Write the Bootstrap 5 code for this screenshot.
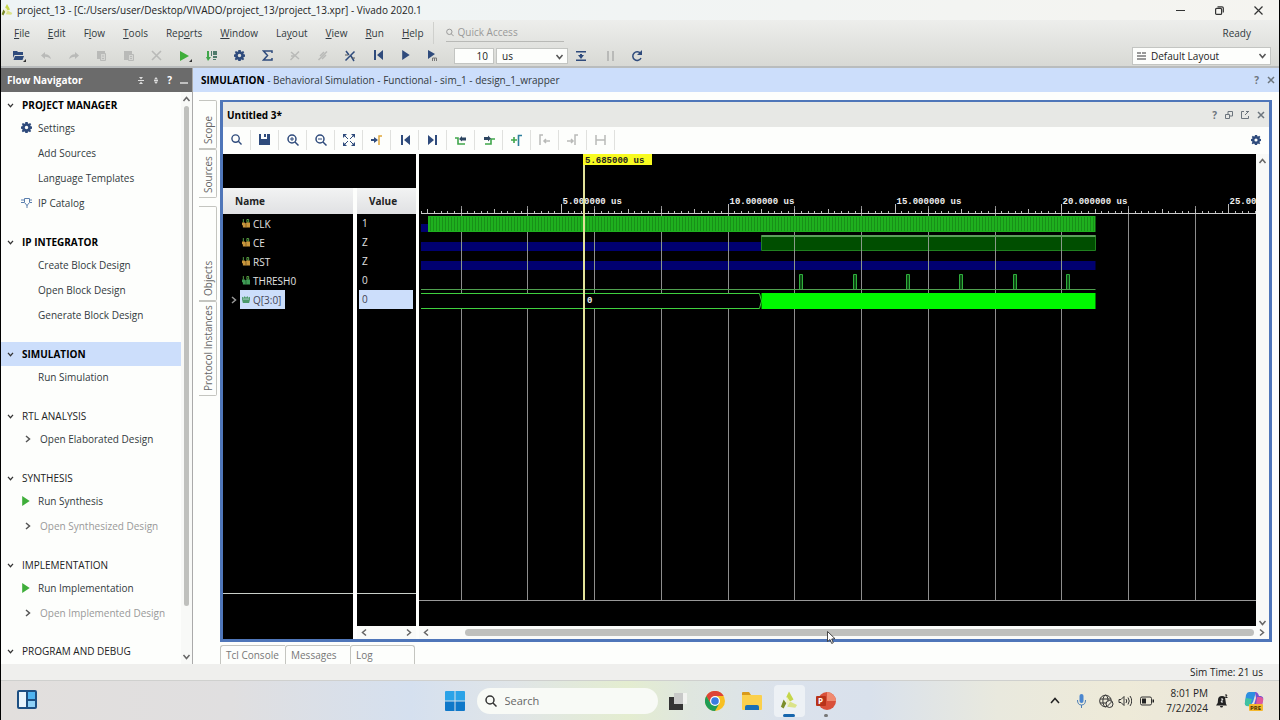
<!DOCTYPE html>
<html lang="en">
<head>
<meta charset="utf-8">
<meta name="viewport" content="width=device-width, initial-scale=1">
<title>project_13 - Vivado 2020.1</title>
<link href="https://cdn.jsdelivr.net/npm/bootstrap@5.3.0/dist/css/bootstrap.min.css" rel="stylesheet">
<style>
  :root { --ink: #333a40; --navy: #2f4b7c; --frame: #4f76b9; --pick: #ccdefb; }
  body { font: 10px/14px "Open Sans", "Noto Sans", sans-serif; color: var(--ink); background: #fdfefc; border: solid #000; border-width: 0 1px; }
  button { font: inherit; color: inherit; background: none; border: 0; padding: 0; }
  svg { display: block; flex: none; }
  a { color: inherit; text-decoration: none; }
  .stroke { fill: none; stroke: currentColor; stroke-width: 1.5; }
  .titlebar { height: 20px; background: linear-gradient(90deg, #eef4f5, #f1f4f4 50%, #f5f4f0); color: #222; }
  .window-buttons { gap: 30px; margin-right: 16px; }
  .chrome { background: linear-gradient(#edeeec, #d8d9d5); border-bottom: 2px solid #b9bcbd; }
  .menu-row { height: 26px; }
  .menu-row .menu-item { padding: 0 9px; }
  .menu-rule { width: 1px; height: 22px; background: #cfd0cd; }
  .quick { width: 118px; height: 22px; margin-left: 12px; padding-top: 3px; border-bottom: 1px solid #b8b9b6; color: #999; }
  .quick input { font: inherit; background: none; border: 0; width: 100%; padding: 0; outline: 0; }
  .quick input::placeholder { color: #999; opacity: 1; }
  .tool-row { height: 20px; color: var(--navy); }
  .tool-set { width: 442px; }
  .tool-set button { flex: 1 1 0; display: flex; justify-content: center; }
  .faded { color: #b9bab8; }
  .field { font: inherit; color: #222; background-color: #fdfefc; border: 1px solid #c3c5c2; border-radius: 0; height: 16px; padding: 0 5px; appearance: none; }
  .run-time { width: 40px; margin-left: 7px; }
  .run-unit { width: 72px; }
  .layout-pick { width: 139px; padding-left: 18px; height: 18px; }
  .pick-wrap { position: relative; margin-left: 2px; }
  .pick-wrap svg { position: absolute; right: 4px; top: 6px; pointer-events: none; }
  .pick-wrap svg.lead-icon { right: auto; left: 5px; top: 5px; }
  .side { width: 191px; }
  .side-head { height: 24px; background: #6b6b6b; color: #fff; padding: 0 4px 0 6px; }
  .tree { padding-top: 1px; }
  .tree-head { height: 24px; color: #222; padding-left: 6px; }
  .tree-head:last-child { height: 22px; }
  .tree-head.strong { font-weight: 700; color: #000; }
  .tree-head.current { background: var(--pick); }
  .tree-list { margin: -2px 0 15px; }
  .tree-item { height: 25px; }
  .tree-mark { width: 17px; margin-left: 20px; }
  .tree-mark.wide { width: 19px; }
  .dim { color: #999; }
  .vscroll { width: 11px; background: #f8f9f7; }
  .side-thumb { margin-bottom: 48px; }
  .wave-scroll { width: 13px; }
  .thumb { background: #bfc0bd; border-radius: 4px; }
  .view-head { height: 24px; background: var(--pick); border-left: 1px solid #aaa; }
  .side-tabs { width: 24px; border-left: 1px solid #aaa; padding: 8px 0 0 6px; }
  .side-tab { writing-mode: vertical-rl; transform: rotate(180deg); width: 18px; border: 1px solid #c4c5c0; border-right: 0; border-radius: 2px 0 0 2px; text-align: left; padding: 4px 0; color: #666; white-space: nowrap; height: 49px; }
  .side-tab.tall { height: 95px; }
  .wave-window { border: 3px solid var(--frame); border-top-width: 2px; margin: 8px 7px 0 0; }
  .win-head { height: 25px; background: #e7e8e5; }
  .win-tools { height: 27px; padding-bottom: 2px; color: var(--navy); }
  .win-tools .tool { width: 28px; height: 20px; border-right: 1px solid #e0e1de; }
  .signals { width: 196px; border-right: 3px solid #fdfefc; background: #000; }
  .sig-table { table-layout: fixed; width: 193px; margin-top: 34px; color: #e2e2e2; border-collapse: separate; border-spacing: 0; }
  .name-col { width: 130px; }
  .sig-table th { height: 26px; padding: 0 12px; color: #222; font-weight: 700; background: linear-gradient(#f2f3f3, #e0e1e3); }
  .sig-table td { height: 19px; padding: 0; }
  .sig-table th + th, .sig-table td + td { border-left: 4px solid #fdfefc; }
  .sig-table td + td { padding-left: 2px; }
  .sig-name { height: 19px; gap: 3px; }
  .sig-name .lead-gap { width: 6px; }
  .sig-name .tag { height: 19px; padding: 0 4px 0 2px; gap: 3px; }
  .chosen { background: var(--pick); color: #445; }
  .val { height: 19px; padding-left: 3px; margin-right: 3px; line-height: 19px; }
  .name-rest { width: 130px; }
  .rest-fill { border-bottom: 1px solid #c9cfc9; }
  .foot-gap { height: 32px; background: #000; }
  .bar-h { height: 13px; background: #fafbf9; color: #666; }
  .wave-foot { height: 26px; background: #000; border-top: 1px solid #999; }
  .wave-bar { position: relative; }
  .wave-thumb { margin: 0 5px 0 36px; }
  .pointer { position: absolute; left: 408px; top: 5px; z-index: 3; }
  .mono { font: bold 9px "Liberation Mono", monospace; fill: #eee; }
  .console { padding-top: 3px; }
  .console-tab { width: 65px; height: 19px; border: 1px solid #c4c5c0; border-width: 1px 0 0 1px; border-radius: 3px 0 0 0; text-align: left; padding-left: 5px; color: #777; }
  .console-tab:last-child { border-right-width: 1px; border-radius: 3px 3px 0 0; }
  .status { height: 16px; background: #efefed; color: #222; }
  .taskbar { height: 40px; border-top: 1px solid #cfd0ce; color: #222; background: linear-gradient(90deg, #e2dfdd, #e0dfe0 18%, #d5e0ef 32%, #e0e5e8 40%, #e4edd0 49%, #dfe6df 54%, #dbe2ec 61%, #d9e1ec 68%, #e9e9de 78%, #eeead8 88%, #e9e5dd); }
  .task-search { width: 181px; height: 26px; margin-right: 2px; border-radius: 13px; background: #f8faf6; font-size: 11px; }
  .task-search input { font: inherit; background: none; border: 0; width: 100%; padding: 0; outline: 0; }
  .task-search input::placeholder { color: #666; opacity: 1; }
  .task-app { width: 37px; height: 32px; position: relative; }
  .task-app.open { background: #edf1f5; border-radius: 4px; width: 31px; margin: 0 3px; }
  .task-app.open::after, .task-app.idle::after { content: ""; position: absolute; bottom: 0; left: 50%; margin-left: -6px; width: 12px; height: 3px; border-radius: 2px; background: #1766ad; }
  .task-app.idle::after { width: 4px; margin-left: -2px; background: #777; }
  .task-side { flex: 1 1 0; }
  .tray { padding-right: 15px; }
</style>
</head>
<body class="d-flex flex-column min-vh-100">

<svg width="0" height="0" class="position-absolute" aria-hidden="true">
  <symbol id="gear" viewBox="0 0 12 12"><path fill="currentColor" fill-rule="evenodd" d="M4.700 0h2.600l.3 1.500 1 .4L9.900 1l1.300 1.400L10.200 3.600l.4 1L12 4.800v2.500l-1.400.3-.4 1 .9 1.300L9.800 11.200l-1.300-.9-1 .4L7.300 12H4.700l-.3-1.300-1-.4-1.400.9L.8 9.900l.9-1.400-.4-1L0 7.300V4.800l1.400-.3.4-1L.9 2.300 2.200 1l1.300.9 1-.4zM6 4.100A1.900 1.900 0 1 0 6 7.900 1.900 1.900 0 1 0 6 4.100z"/></symbol>
  <symbol id="down" viewBox="0 0 8 6"><path class="stroke" d="M1 1l3 3.500L7 1"/></symbol>
  <symbol id="up" viewBox="0 0 8 6"><path class="stroke" d="M1 5l3-3.500L7 5"/></symbol>
  <symbol id="right" viewBox="0 0 6 8"><path class="stroke" d="M1 1l3.500 3L1 7"/></symbol>
  <symbol id="left" viewBox="0 0 6 8"><path class="stroke" d="M5 1L1.500 4 5 7"/></symbol>
  <symbol id="cross" viewBox="0 0 8 8"><path class="stroke" d="M1 1l6 6M7 1L1 7"/></symbol>
  <symbol id="play" viewBox="0 0 10 12"><path fill="currentColor" d="M1 0l9 6-9 6z"/></symbol>
  <symbol id="lens" viewBox="0 0 12 12"><circle class="stroke" cx="5" cy="5" r="4"/><path class="stroke" d="M8 8l3.500 3.500"/></symbol>
  <symbol id="first" viewBox="0 0 10 10"><path fill="currentColor" d="M1 0h2v10H1zM10 0v10L4 5z"/></symbol>
  <symbol id="last" viewBox="0 0 10 10"><path fill="currentColor" d="M7 0h2v10H7zM0 0v10l6-5z"/></symbol>
  <symbol id="bits" viewBox="0 0 9 10"><path fill="none" stroke="#5fae4a" d="M1.500 0v4M5.500 .5h2v3h-2z"/><path fill="currentColor" d="M0 4h3l1 1 1-1h4v5.500H1V7H0z"/><path stroke="#00000060" d="M4.500 5v4"/></symbol>
  <symbol id="bus" viewBox="0 0 9 10"><path fill="#4c9a6b" d="M0 2l2 1 1-2 1.500 2L6 1l1 2 2-1v3L8 9H1L0 5z"/><path stroke="#b8d8d8" d="M1 4.500h7"/></symbol>
  <symbol id="vivado" viewBox="0 0 20 20"><path fill="#c5d64a" d="M10 0l5 9-4 2-4-5z"/><path fill="#dbe38a" d="M11 11l8 4-2 3-9-1z"/><path fill="#7b8d2c" d="M4 9l3 4-3 6-3-2z"/><path fill="#eff2be" d="M8 6l3 5-3 5-1-4z"/></symbol>
</svg>

<header>
  <div class="titlebar d-flex align-items-center">
    <svg width="12" height="12"><use href="#vivado"/></svg>
    <span class="ms-1">project_13 - [C:/Users/user/Desktop/VIVADO/project_13/project_13.xpr] - Vivado 2020.1</span>
    <div class="window-buttons ms-auto d-flex align-items-center">
      <button aria-label="Minimize"><svg width="9" height="9"><path stroke="#333" d="M0 4.500h9"/></svg></button>
      <button aria-label="Restore"><svg width="9" height="9" fill="none" stroke="#333" stroke-width="1.200"><rect x=".6" y="2.400" width="6" height="6" rx="1"/><path d="M2.500 .8H7q1.300 0 1.300 1.300v4.500"/></svg></button>
      <button aria-label="Close"><svg width="9" height="9"><path stroke="#333" stroke-width="1.200" d="M.5 .5l8 8M8.500 .5l-8 8"/></svg></button>
    </div>
  </div>
  <div class="chrome">
    <div class="menu-row d-flex align-items-center">
      <nav class="d-flex ps-1">
        <a class="menu-item" href="#"><u>F</u>ile</a><a class="menu-item" href="#"><u>E</u>dit</a><a class="menu-item" href="#">F<u>l</u>ow</a><a class="menu-item" href="#"><u>T</u>ools</a><a class="menu-item" href="#">Rep<u>o</u>rts</a><a class="menu-item" href="#"><u>W</u>indow</a><a class="menu-item" href="#">La<u>y</u>out</a><a class="menu-item" href="#"><u>V</u>iew</a><a class="menu-item" href="#"><u>R</u>un</a><a class="menu-item" href="#"><u>H</u>elp</a>
      </nav>
      <span class="menu-rule"></span>
      <label class="quick d-flex align-items-center align-self-start"><svg class="me-1" width="8" height="9"><use href="#lens"/></svg><input type="text" placeholder="Quick Access" aria-label="Quick Access"></label>
      <span class="ms-auto pe-4 me-1">Ready</span>
    </div>
    <div class="tool-row d-flex align-items-center ps-1">
      <div class="tool-set d-flex">
        <button aria-label="Open"><svg width="14" height="12"><path fill="currentColor" d="M1 1h4l1 1h5v3H2.500L1 8zM3 6h9l-1.500 4H1.500z"/><path fill="#333" d="M14 9v3h-3z"/></svg></button>
        <button class="faded" aria-label="Undo"><svg width="12" height="12"><path fill="currentColor" d="M1 5.500l4-3.500v2.200q5 0 6 4.800Q8 6.800 5 6.800V9z"/></svg></button>
        <button class="faded" aria-label="Redo"><svg width="12" height="12"><path fill="currentColor" d="M11 5.500L7 2v2.200q-5 0-6 4.800Q4 6.800 7 6.800V9z"/></svg></button>
        <button class="faded" aria-label="Copy"><svg width="12" height="12"><path fill="currentColor" d="M1 1h8v8H1z"/><path fill="#d4d5d2" stroke="currentColor" d="M4.500 3.500h5v7h-5zM6 6h2M6 8.500h2"/></svg></button>
        <button class="faded" aria-label="Paste"><svg width="12" height="12"><path fill="currentColor" d="M1 1h8v9H1z"/><path fill="#d4d5d2" stroke="currentColor" d="M5.500 4.500h5v6h-5zM7 6.500h2M7 8.500h2"/></svg></button>
        <button class="faded" aria-label="Delete"><svg width="11" height="11"><path stroke="currentColor" stroke-width="1.600" d="M1 1l9 9M10 1l-9 9"/></svg></button>
        <button aria-label="Run"><svg width="14" height="12"><path fill="#3fae3a" d="M2 1l9 5-9 5z"/><path fill="#333" d="M14 9v3h-3z"/></svg></button>
        <button aria-label="Program"><svg width="12" height="12"><path fill="#3fa64a" d="M1 1h2v6h2l-3 4-2-4h1z"/><path fill="#4e7a6a" d="M5 1h1v5H5zM7 1h4v4H7zM7 6h4v2H7zM7 9h3v1H7z"/></svg></button>
        <button aria-label="Settings"><svg width="11" height="11"><use href="#gear"/></svg></button>
        <button aria-label="Report"><svg width="11" height="11"><path class="stroke" stroke-width="2" d="M10 3V1H1.500l4 4.500-4 4.500H10V8"/></svg></button>
        <button class="faded" aria-label="Disable breakpoints"><svg width="12" height="12"><path class="stroke" d="M1.500 10L10 1.500M2 2l8 7M2 6h4"/></svg></button>
        <button class="faded" aria-label="Clear"><svg width="12" height="12"><path class="stroke" d="M1.500 10L10 1.500M3 6l4-4M5 9l4-4"/></svg></button>
        <button aria-label="Break"><svg width="12" height="12"><path class="stroke" d="M1.500 10.500L10.500 1.500M2 1l3 4M7 6l3 5"/><path stroke="#555" d="M1 5h3M8 8h3"/></svg></button>
        <button aria-label="Restart"><svg width="10" height="10"><use href="#first"/></svg></button>
        <button aria-label="Run all"><svg width="9" height="10"><use href="#play"/></svg></button>
        <button aria-label="Run for"><svg width="12" height="12"><path fill="currentColor" d="M1 0l7 4-7 5z"/><path fill="none" stroke="#777" d="M5.500 11V8h2v3V8h2v3"/></svg></button>
      </div>
      <input class="field run-time text-end" type="text" value="10" aria-label="Run time">
      <span class="pick-wrap d-flex"><select class="field run-unit" aria-label="Time unit"><option>us</option></select><svg width="9" height="6" color="#555"><use href="#down"/></svg></span>
      <button class="ms-2" aria-label="Step"><svg width="11" height="12"><path fill="currentColor" d="M0 1h10v1.500H0zM0 9.500h10V11H0zM4 4h2v1h2L5 9 2 5h2z"/></svg></button>
      <button class="ms-3 ps-1 faded" aria-label="Pause"><svg width="8" height="10"><path fill="currentColor" d="M0 0h2v10H0zM5 0h2v10H5z"/></svg></button>
      <button class="ms-3" aria-label="Relaunch"><svg width="12" height="12"><path class="stroke" stroke-width="1.800" d="M9.500 3.500A4.300 4.300 0 1 0 10 8"/><path fill="currentColor" d="M11 0v5H6z"/></svg></button>
      <span class="pick-wrap ms-auto me-2 d-flex"><svg class="lead-icon" width="10" height="9"><path stroke="#999" stroke-width="2" d="M0 1h4M5 1h4M0 4h9M0 7h9"/></svg><select class="field layout-pick" aria-label="Layout"><option>Default Layout</option></select><svg width="9" height="6" color="#555"><use href="#down"/></svg></span>
    </div>
  </div>
</header>

<main class="d-flex flex-fill">
  <aside class="side d-flex flex-column">
    <div class="side-head d-flex align-items-center"><b>Flow Navigator</b>
      <button class="ms-auto" aria-label="Collapse all"><svg width="8" height="9" fill="#ddd"><path d="M1 4h6v1H1zM4 3.500L2 1h4zM4 5.500L2 8h4z"/></svg></button>
      <button class="ms-2" aria-label="Expand all"><svg width="6" height="9" fill="#ddd"><path d="M3 1l2 2.500H1zM3 8L1 5.500h4zM1 4h4v1H1z"/></svg></button>
      <button class="ms-2 fw-bold" aria-label="Help">?</button>
      <button class="ms-2" aria-label="Minimize panel"><svg width="8" height="9"><path stroke="#ddd" stroke-width="1.500" d="M0 7h8"/></svg></button>
    </div>
    <div class="d-flex flex-fill">
      <nav class="tree flex-fill" id="tree"></nav>
      <div class="vscroll d-flex flex-column align-items-center pt-1">
        <svg width="9" height="6" color="#666"><use href="#up"/></svg>
        <div class="thumb side-thumb flex-fill w-50 mt-1"></div>
        <svg class="mb-1" width="9" height="6" color="#666"><use href="#down"/></svg>
      </div>
    </div>
  </aside>

  <section class="flex-fill d-flex flex-column">
    <div class="view-head d-flex align-items-center ps-2"><span><b class="text-black">SIMULATION</b> - Behavioral Simulation - Functional - sim_1 - design_1_wrapper</span>
      <button class="ms-auto fw-bold text-secondary" aria-label="Help">?</button><button class="ms-2 me-1 text-secondary" aria-label="Close view"><svg width="8" height="8"><use href="#cross"/></svg></button>
    </div>
    <div class="d-flex flex-fill">
      <div class="side-tabs d-flex flex-column me-1">
        <button class="side-tab">Scope</button>
        <button class="side-tab">Sources</button>
        <button class="side-tab tall mt-2">Objects</button>
        <button class="side-tab tall">Protocol Instances</button>
      </div>
      <div class="flex-fill d-flex flex-column">
        <div class="wave-window d-flex flex-column flex-fill">
          <div class="win-head d-flex align-items-center px-1"><b class="text-black">Untitled 3*</b>
            <div class="ms-auto d-flex align-items-center gap-2 text-secondary">
              <button class="fw-bold" aria-label="Help">?</button>
              <button aria-label="Float"><svg width="8" height="8" fill="none" stroke="currentColor"><path d="M.5 3.500h4v4h-4zM3 3V.5h4.500V5H5"/></svg></button>
              <button aria-label="Detach"><svg width="8" height="8" fill="none" stroke="currentColor"><path d="M3 .5H.5v7h7V5M4 4l3.500-3.500M5 .5h3"/></svg></button>
              <button aria-label="Close"><svg width="8" height="8"><use href="#cross"/></svg></button>
            </div>
          </div>
          <div class="win-tools d-flex align-items-center">
            <button class="tool d-flex align-items-center justify-content-center" aria-label="Find"><svg width="11" height="11"><use href="#lens"/></svg></button>
            <button class="tool d-flex align-items-center justify-content-center" aria-label="Save"><svg width="11" height="11"><path fill="currentColor" d="M0 0h2v5h6V0h3v11H0zM5 0h2v3H5z"/></svg></button>
            <button class="tool d-flex align-items-center justify-content-center" aria-label="Zoom in"><svg width="12" height="12"><use href="#lens"/><path stroke="currentColor" d="M3 5h4M5 3v4"/></svg></button>
            <button class="tool d-flex align-items-center justify-content-center" aria-label="Zoom out"><svg width="12" height="12"><use href="#lens"/><path stroke="currentColor" d="M3 5h4"/></svg></button>
            <button class="tool d-flex align-items-center justify-content-center" aria-label="Zoom fit"><svg width="12" height="12"><path stroke="currentColor" d="M1 1l4 4M11 1L7 5M1 11l4-4M11 11L7 7"/><path fill="currentColor" d="M0 0h4L0 4zM12 0v4L8 0zM0 12V8l4 4zM12 12H8l4-4z"/></svg></button>
            <button class="tool d-flex align-items-center justify-content-center" aria-label="Go to cursor"><svg width="12" height="12"><path fill="currentColor" d="M0 5h3V3l4 3-4 3V7H0z"/><path stroke="#dfa63a" stroke-width="1.500" fill="none" d="M11 2H8v9"/></svg></button>
            <button class="tool d-flex align-items-center justify-content-center" aria-label="Go to start"><svg width="10" height="10"><use href="#first"/></svg></button>
            <button class="tool d-flex align-items-center justify-content-center" aria-label="Go to end"><svg width="10" height="10"><use href="#last"/></svg></button>
            <button class="tool d-flex align-items-center justify-content-center" aria-label="Previous transition"><svg width="12" height="12"><path fill="none" stroke="#3fa64a" stroke-width="1.600" d="M0 4h3v6h7"/><path fill="#2c4560" d="M4 5l3-3v1.500h4v3H7v1z"/></svg></button>
            <button class="tool d-flex align-items-center justify-content-center" aria-label="Next transition"><svg width="12" height="12"><path fill="none" stroke="#3fa64a" stroke-width="1.600" d="M2 10h6V5h4"/><path fill="#2c4560" d="M8 4.500L5 1.500V3H1v3h4v1.500z"/></svg></button>
            <button class="tool d-flex align-items-center justify-content-center" aria-label="Add marker"><svg width="12" height="12"><path stroke="#3fa64a" stroke-width="1.600" d="M0 6h6M3 3v6"/><path fill="none" stroke="#2d7f9d" stroke-width="1.600" d="M7.500 12V1.500H11"/></svg></button>
            <button class="tool d-flex align-items-center justify-content-center faded" aria-label="Previous marker"><svg width="12" height="12"><path class="stroke" d="M4 1H1v10M5 7h6M7 5L5 7l2 2"/></svg></button>
            <button class="tool d-flex align-items-center justify-content-center faded" aria-label="Next marker"><svg width="12" height="12"><path class="stroke" d="M11 1H8v10M0 7h6M4 5l2 2-2 2"/></svg></button>
            <button class="tool d-flex align-items-center justify-content-center faded" aria-label="Swap cursors"><svg width="12" height="12"><path class="stroke" d="M1 1v10M10 1v10M1 6h9"/></svg></button>
            <button class="ms-auto me-2" aria-label="Wave settings"><svg width="10" height="10"><use href="#gear"/></svg></button>
          </div>
          <div class="d-flex flex-fill">
            <div class="signals d-flex flex-column">
              <table class="sig-table">
                <colgroup><col class="name-col"><col></colgroup>
                <thead><tr><th>Name</th><th>Value</th></tr></thead>
                <tbody id="rows"></tbody>
              </table>
              <div class="d-flex flex-fill">
                <div class="name-rest d-flex flex-column"><div class="rest-fill flex-fill"></div><div class="foot-gap"></div><div class="bar-h bg-black"></div></div>
                <div class="border-start border-4 border-white flex-fill d-flex flex-column"><div class="rest-fill flex-fill"></div><div class="foot-gap"></div>
                  <div class="bar-h d-flex align-items-center justify-content-between px-1"><svg width="6" height="9"><use href="#left"/></svg><svg width="6" height="9"><use href="#right"/></svg></div></div>
              </div>
            </div>
            <div class="flex-fill d-flex flex-column">
              <div class="d-flex flex-fill">
                <div class="flex-fill d-flex flex-column bg-black">
                  <div class="flex-fill position-relative"><svg id="wave" class="position-absolute w-100 h-100" role="img" aria-label="Waveforms"></svg></div>
                  <div class="wave-foot"></div>
                </div>
                <div class="vscroll wave-scroll d-flex flex-column align-items-center justify-content-between pt-1"><svg width="9" height="6" color="#666"><use href="#up"/></svg><svg width="9" height="6" color="#666"><use href="#down"/></svg></div>
              </div>
              <div class="bar-h wave-bar d-flex align-items-center ps-1">
                <svg width="6" height="9"><use href="#left"/></svg>
                <div class="thumb wave-thumb flex-fill h-50"></div>
                <svg class="me-1" width="6" height="9"><use href="#right"/></svg>
                <svg class="pointer" width="9" height="13"><path fill="#fff" stroke="#333" stroke-width=".9" d="M.5 .5v10l2.500-2 1.700 4 1.600-.8-1.600-3.700 3.300-.3z"/></svg>
              </div>
            </div>
          </div>
        </div>
        <div class="console d-flex">
          <button class="console-tab">Tcl Console</button><button class="console-tab">Messages</button><button class="console-tab">Log</button>
        </div>
      </div>
    </div>
  </section>
</main>

<footer>
  <div class="status d-flex align-items-center justify-content-end pe-3">Sim Time: 21 us</div>
  <div class="taskbar d-flex align-items-center">
    <div class="task-side ps-3"><button aria-label="Widgets"><svg width="20" height="19"><rect width="20" height="19" rx="2" fill="#1d4f83"/><path fill="#e9f4fc" d="M2 2h7v15H2z"/><path fill="#4fb3f0" d="M11 2h7v7h-7z"/><path fill="#8fd1f7" d="M11 11h7v6h-7z"/></svg></button></div>
    <div class="d-flex align-items-center ps-2">
      <button class="me-2 pe-1" aria-label="Start"><svg width="20" height="20"><path fill="#2ba3e8" d="M0 1q0-1 1-1h8.500v9.500H0zM10.500 0H19q1 0 1 1v8.500h-9.500z"/><path fill="#0f78c9" d="M0 10.500h9.500V20H1q-1 0-1-1zM10.500 10.500H20V19q0 1-1 1h-8.500z"/></svg></button>
      <label class="task-search d-flex align-items-center px-2"><svg class="me-2" width="12" height="12" color="#333"><use href="#lens"/></svg><input type="text" placeholder="Search" aria-label="Search"></label>
      <button class="task-app d-flex align-items-center justify-content-center" aria-label="Task view"><svg width="20" height="18"><path fill="#333" d="M1 5h14v13H1z"/><path fill="#c8c9c8" d="M6 1h9v11H6z"/><path fill="#f2f3f0" d="M15 1h4v11h-4z"/></svg></button>
      <button class="task-app d-flex align-items-center justify-content-center" aria-label="Chrome"><svg width="20" height="20" viewBox="0 0 20 20"><circle cx="10" cy="10" r="10" fill="#f8c022"/><path fill="#dd4437" d="M1.300 5A10 10 0 0 1 18.700 5H10L5.700 12.500z"/><path fill="#1f9c55" d="M1.300 5A10 10 0 0 0 10 20l4.300-7.500-8.600 0z"/><circle cx="10" cy="10" r="5" fill="#fff"/><circle cx="10" cy="10" r="3.800" fill="#3a7be0"/></svg></button>
      <button class="task-app d-flex align-items-center justify-content-center" aria-label="File Explorer"><svg width="20" height="18"><path fill="#d99a1c" d="M0 1q0-1 1-1h6l2 3H0z"/><path fill="#fbd04c" d="M0 3h19q1 0 1 1v13q0 1-1 1H1q-1 0-1-1z"/><path fill="#1a6fb5" d="M3 18v-3q0-2 2-2h10q2 0 2 2v3z"/></svg></button>
      <button class="task-app open d-flex align-items-center justify-content-center" aria-label="Vivado"><svg width="18" height="19"><use href="#vivado"/></svg></button>
      <button class="task-app idle d-flex align-items-center justify-content-center" aria-label="PowerPoint"><svg width="20" height="20"><circle cx="11" cy="10" r="9" fill="#d9503a"/><path fill="#f08a70" d="M11 1a9 9 0 0 1 9 9h-9z"/><rect y="5" width="10" height="10" rx="1" fill="#b83219"/><text x="2" y="13" font-size="8" font-weight="700" fill="#fff">P</text></svg></button>
    </div>
    <div class="task-side tray d-flex align-items-center justify-content-end">
      <svg class="me-3" width="10" height="7"><path class="stroke" stroke-width="1.200" d="M1 6l4-4.500L9 6"/></svg>
      <svg class="me-2" width="11" height="14"><rect x="3.500" width="4" height="9" rx="2" fill="#4b86cf"/><path fill="none" stroke="#4b7db5" d="M1.500 6q0 5 4 5t4-5M5.500 11v3"/></svg>
      <svg class="mx-1" width="15" height="14" fill="none" stroke="#333"><circle cx="6.500" cy="7" r="5.800"/><ellipse cx="6.500" cy="7" rx="2.600" ry="5.800"/><path d="M1 5h11M1 9h7"/><circle cx="10.500" cy="10" r="3.500" fill="#ece9dc"/><path d="M8 12.500l5-5"/></svg>
      <svg class="me-2" width="14" height="12" fill="none" stroke="#333"><path d="M1 4.500h2l3-3v9l-3-3H1zM8 4q1.500 2 0 4M10 2.500q2.500 3.500 0 7M12 1q3.500 5 0 10"/></svg>
      <svg class="me-2" width="14" height="10"><rect x=".5" y="1" width="11" height="8" rx="1.500" fill="none" stroke="#333"/><path fill="#222" d="M2 2.500h4v5H2zM12.500 3.500H14v3h-1.500z"/></svg>
      <div class="text-end ps-1 lh-base">8:01 PM<br>7/2/2024</div>
      <svg class="ms-2" width="12" height="14"><path fill="#222" d="M1 10q1-1 1-4 0-4 4-4 2 0 3 1l1 7 1 1.500H0zM4 12h3q0 1.500-1.500 1.500T4 12z"/><path fill="none" stroke="#eee" d="M5 5h2L5 8h2"/><path fill="none" stroke="#222" d="M9 1h2L9.500 3.500h2"/></svg>
      <svg class="ms-3" width="20" height="20"><path fill="#2e8fe0" d="M5 1h7l-3 10-3 4H4Q0 15 1 11l1-7q1-3 3-3z"/><path fill="#7a4fd0" d="M11 1q3 0 4 4h2q3 1 2 4l-1 5q-1 3-4 3H9l3-10z"/><path fill="#3fc2a0" d="M2 7l6 1-2 7Q0 16 1 11z"/><path fill="#e0589c" d="M13 6h4q3 1 2 4l-1 4h-6z"/><rect x="5" y="13" width="14" height="7" rx="1" fill="#f5b82c"/><text x="6" y="19" font-size="6" font-weight="700" fill="#4a3000">PRE</text></svg>
    </div>
  </div>
</footer>

<script>
  // Flow navigator: [heading, style classes, items]; an item is [label, mark, dimmed]
  const tree = [
    ['PROJECT MANAGER', 'strong', [['Settings', 'gear'], ['Add Sources'], ['Language Templates'], ['IP Catalog', 'chip']]],
    ['IP INTEGRATOR', 'strong', [['Create Block Design'], ['Open Block Design'], ['Generate Block Design']]],
    ['SIMULATION', 'strong current', [['Run Simulation']]],
    ['RTL ANALYSIS', '', [['Open Elaborated Design', 'right']]],
    ['SYNTHESIS', '', [['Run Synthesis', 'play'], ['Open Synthesized Design', 'right', true]]],
    ['IMPLEMENTATION', '', [['Run Implementation', 'play'], ['Open Implemented Design', 'right', true]]],
    ['PROGRAM AND DEBUG', '', []]
  ];
  const marks = {
    gear: '<svg width="11" height="11" color="#2f4b7c"><use href="#gear"/></svg>',
    chip: '<svg width="11" height="11" fill="none" stroke="#5b7fae"><path d="M3.500 1.500h5v4l-2.500 3-2.500-3zM0 3h3M0 5.500h3M9 3h2M9 5.500h2M6 8v3"/></svg>',
    right: '<svg class="ms-1" width="6" height="8" color="#555"><use href="#right"/></svg>',
    play: '<svg width="9" height="10" color="#3fae3a"><use href="#play"/></svg>'
  };
  const item = ([label, mark, dim]) =>
    `<li class="tree-item d-flex align-items-center"><span class="tree-mark ${mark === 'right' ? 'wide' : ''}">${marks[mark] || ''}</span><a href="#" class="${dim ? 'dim' : ''}">${label}</a></li>`;
  document.getElementById('tree').innerHTML = tree.map(([head, cls, items]) =>
    `<div class="tree-head ${cls} d-flex align-items-center"><svg class="me-2" width="7" height="5" color="#333"><use href="#down"/></svg>${head}</div>` +
    (items.length ? `<ul class="tree-list list-unstyled">${items.map(item).join('')}</ul>` : '')).join('');

  const signals = [['CLK', '1', '#c8963c'], ['CE', 'Z', '#c8963c'], ['RST', 'Z', '#c8963c'], ['THRESH0', '0', '#3f9c55'], ['Q[3:0]', '0', '']];
  document.getElementById('rows').innerHTML = signals.map(([name, value, color]) => {
    const bus = !color;
    return `<tr><td><div class="sig-name d-flex align-items-center ps-2">${bus ? '<svg width="6" height="8" color="#999"><use href="#right"/></svg>' : '<span class="lead-gap"></span>'}
      <span class="tag d-flex align-items-center ${bus ? 'chosen' : ''}"><svg width="8" height="9" color="${color || '#4c9a6b'}"><use href="#${bus ? 'bus' : 'bits'}"/></svg>${name}</span></div></td>
      <td><div class="val ${bus ? 'chosen' : ''}">${value}</div></td></tr>`;
  }).join('');

  // Waveform canvas: time in us, drawn at a fixed zoom
  const wave = document.getElementById('wave');
  const zoom = 33.37, origin = -25, x = t => Math.round(origin + t * zoom) + .5;
  function drawWave() {
    const last = (wave.parentNode.clientWidth - origin) / zoom;
    const end = x(21), go = x(11);
    let s = '';
    for (let t = 2; t < last; t += 2) s += `<path stroke="#8d8d8d" d="M${x(t)} 52V2000"/>`;
    for (let i = 4; i < last * 5; i++) {
      const h = i % 25 === 0 ? 10 : i % 5 === 0 ? 5 : 3;
      s += `<path stroke="#bbb" d="M${x(i / 5)} ${60 - h}V60"/>`;
    }
    s += '<path stroke="#ccc" d="M2 59.500H3000"/>';
    s += `<path fill="#000070" d="M2 70h7v8H2zM2 88H${go}v9H2zM2 107H${end}v9H2z"/>`;
    s += `<path fill="#1eb01e" d="M9 62H${end}v16H9z"/>`;
    for (let p = 11; p < end; p += 3) s += `<path stroke="#189018" d="M${p}.5 63v14"/>`;
    s += `<path fill="#004e00" stroke="#208020" d="M${go} 81.500H${end}v15H${go}z"/><path stroke="#5aa05a" stroke-width="2" d="M${go} 82H${end}"/>`;
    for (let t = 2; t < 21; t += 2) s += `<path stroke="#8a9a8a" d="M${x(t)} ${t < 11 ? 88 : 83}v${t < 11 ? 9 : 14}M${x(t)} 107v9"/>`;
    s += `<path stroke="#50a050" d="M2 135.500H${end}"/>`;
    for (const p of [380, 434, 487, 540, 594, 647]) s += `<path fill="#0c4a14" stroke="#2fae3c" d="M${p}.5 135v-14.500h3V135"/>`;
    s += `<path fill="#000" stroke="#3fd03f" d="M2 139.500H${go - 2}L${go} 147l-2 7.500H2"/><path fill="#00f800" d="M${go} 139H${end}v16H${go}z"/>`;
    for (let t = 5; t < last; t += 5) s += `<text class="mono" x="${x(t) + 1}" y="50">${t}.000000 us</text>`;
    s += '<path stroke="#e2e29a" stroke-width="2" d="M165 0V2000"/><path fill="#f8fb20" d="M164 0h69v11h-69z"/>';
    s += '<text class="mono" style="fill:#222" x="166" y="9">5.685000 us</text><text class="mono" x="168" y="149">0</text>';
    wave.innerHTML = s;
  }
  drawWave();
  addEventListener('resize', drawWave);
</script>
<script src="https://cdn.jsdelivr.net/npm/bootstrap@5.3.0/dist/js/bootstrap.bundle.min.js"></script>
</body>
</html>
